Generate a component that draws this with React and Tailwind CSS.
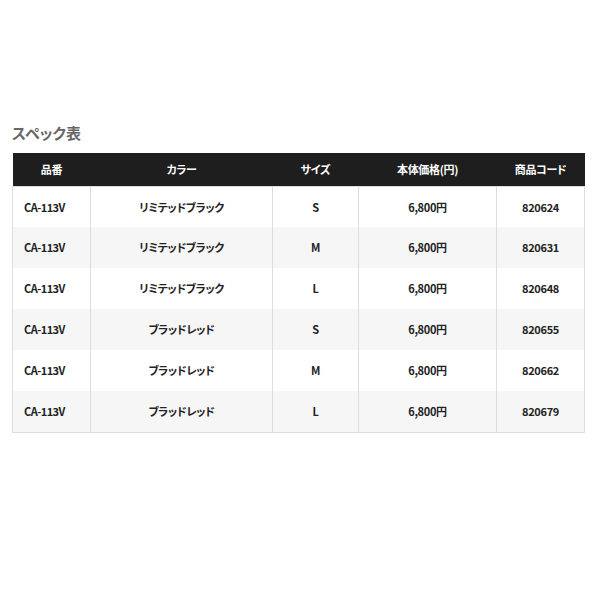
import React from "react";

const rows = [
  { no: "CA-113V", color: "リミテッドブラック", size: "S", price: "6,800円", code: "820624" },
  { no: "CA-113V", color: "リミテッドブラック", size: "M", price: "6,800円", code: "820631" },
  { no: "CA-113V", color: "リミテッドブラック", size: "L", price: "6,800円", code: "820648" },
  { no: "CA-113V", color: "ブラッドレッド", size: "S", price: "6,800円", code: "820655" },
  { no: "CA-113V", color: "ブラッドレッド", size: "M", price: "6,800円", code: "820662" },
  { no: "CA-113V", color: "ブラッドレッド", size: "L", price: "6,800円", code: "820679" },
];

const App = () => {
  return (
    <div
      className="w-[600px] h-[600px] bg-white px-3 pt-[122px] [font-feature-settings:'palt']"
      style={{ fontFamily: '"Noto Sans CJK JP", "Noto Sans", sans-serif' }}
    >
      {/* title */}
      <h2 className="text-[15px] leading-[22px] font-bold text-[#666] mb-[9px]">
        スペック表
      </h2>

      {/* spec table */}
      <table className="w-[572px] table-fixed border-collapse text-[11px] tracking-[-0.03em] font-bold text-[#222]">
        <colgroup>
          <col className="w-[78px]" />
          <col className="w-[182px]" />
          <col className="w-[86px]" />
          <col className="w-[138px]" />
          <col className="w-[88px]" />
        </colgroup>
        <thead>
          <tr className="bg-[#1e1e1e] text-white h-[33px]">
            <th className="font-bold">品番</th>
            <th className="font-bold">カラー</th>
            <th className="font-bold">サイズ</th>
            <th className="font-bold">本体価格(円)</th>
            <th className="font-bold">商品コード</th>
          </tr>
        </thead>
        <tbody className="border border-[#dddddd]">
          {rows.map((r, i) => (
            <tr key={i} className={`h-[41px] ${i % 2 === 1 ? "bg-[#f6f6f6]" : "bg-white"}`}>
              <td className="text-left pl-[11px] tracking-[-0.05em] border-r border-[#dddddd]">{r.no}</td>
              <td className="text-center border-r border-[#dddddd]">{r.color}</td>
              <td className="text-center border-r border-[#dddddd]">{r.size}</td>
              <td className="text-center border-r border-[#dddddd]">{r.price}</td>
              <td className="text-center">{r.code}</td>
            </tr>
          ))}
        </tbody>
      </table>
    </div>
  );
};

export default App;
